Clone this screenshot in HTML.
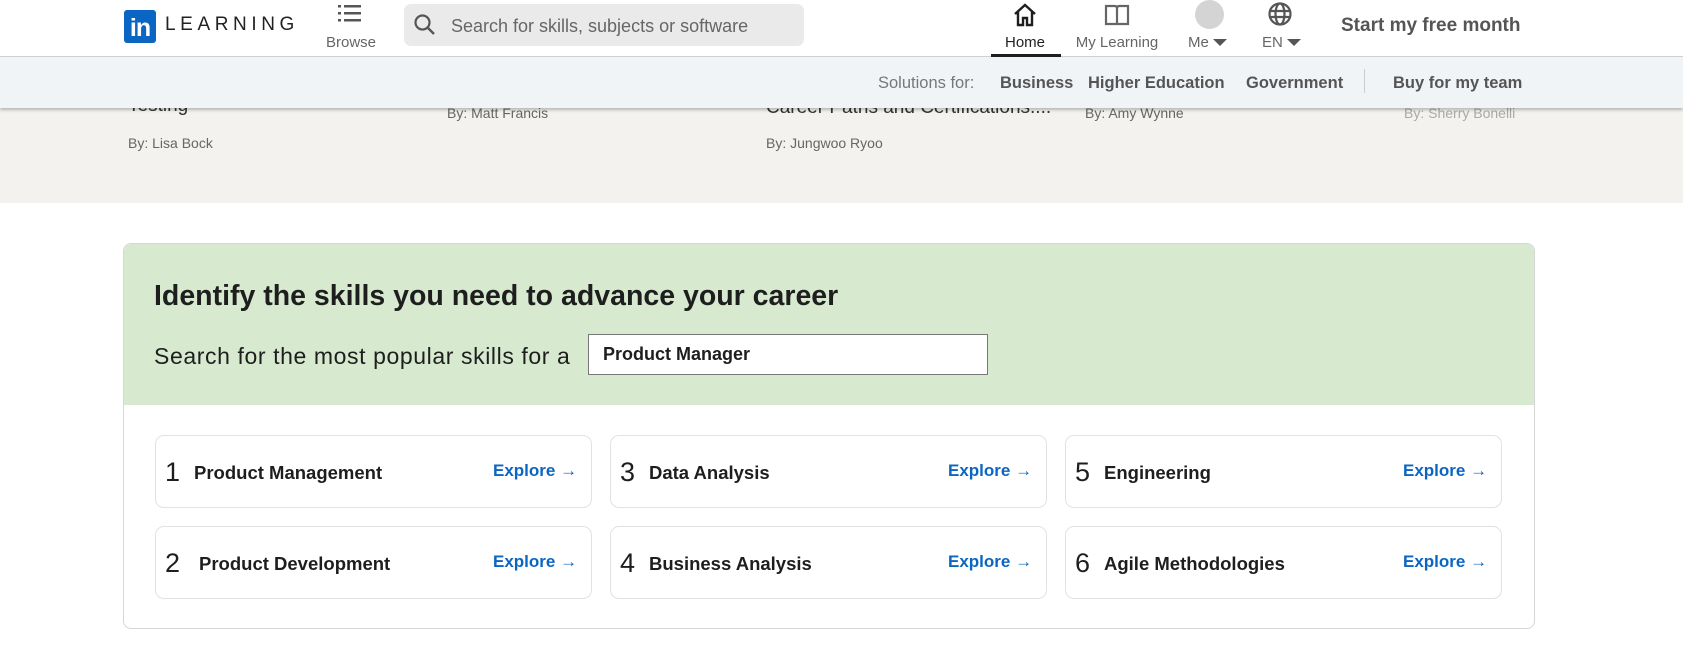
<!DOCTYPE html>
<html><head><meta charset="utf-8"><style>
*{box-sizing:border-box;margin:0;padding:0}
body{width:1683px;height:667px;overflow:hidden;background:#fff;font-family:"Liberation Sans",sans-serif;position:relative;color:#1e1e1e}
.a{position:absolute;white-space:nowrap}
#hdr{position:absolute;left:0;top:0;width:1683px;height:57px;background:#fff;border-bottom:1px solid #d0d0d0;z-index:3}
#sub{position:absolute;left:0;top:57px;width:1683px;height:51px;background:#f1f4f7;box-shadow:0 2px 3px rgba(0,0,0,.25);z-index:2}
#band{position:absolute;left:0;top:57px;width:1683px;height:146px;background:#f3f2ef}
.nav{font-size:15px;color:#666;text-align:center}
.sub{font-size:16.5px;color:#555;top:74px;font-weight:bold}
.by{font-size:14px;color:#666}
#card{position:absolute;left:123px;top:243px;width:1412px;height:386px;border:1px solid #d6d6d6;border-radius:8px;overflow:hidden}
#green{position:absolute;left:0;top:0;width:100%;height:161px;background:#d7ead0}
.tile{position:absolute;width:437px;height:73px;border:1px solid #e2e2e2;border-radius:9px;background:#fff}
.tile .n{position:absolute;left:9px;top:21px;font-size:27px;color:#1e1e1e}
.tile .l{position:absolute;left:38px;top:26px;font-size:18.5px;color:#1e1e1e;font-weight:bold}
.tile .e{position:absolute;left:337px;top:25px;font-size:17px;color:#0a66c2;font-weight:bold}
</style></head><body>
<div id="band">
<div class="a" style="left:128px;top:38px;font-size:19px;color:#333">Testing</div>
<div class="a by" style="left:128px;top:78px">By: Lisa Bock</div>
<div class="a by" style="left:447px;top:48px">By: Matt Francis</div>
<div class="a" style="left:766px;top:40px;font-size:19px;color:#333">Career Paths and Certifications....</div>
<div class="a by" style="left:766px;top:78px">By: Jungwoo Ryoo</div>
<div class="a by" style="left:1085px;top:48px">By: Amy Wynne</div>
<div class="a by" style="left:1404px;top:48px;color:#aaa">By: Sherry Bonelli</div>
</div>
<div id="hdr">
<div class="a" style="left:124px;top:10px;width:32px;height:33px;background:#0a66c2;border-radius:3px;color:#fff;font-weight:bold;font-size:25px;line-height:36px;text-align:center;letter-spacing:-1px">in</div>
<div class="a" style="left:165px;top:14px;font-size:19px;letter-spacing:4.6px;color:#222">LEARNING</div>
<svg class="a" style="left:336px;top:2px" width="28" height="24" viewBox="0 0 28 24"><g fill="#555"><rect x="2" y="3" width="3" height="2.5"/><rect x="2" y="10" width="3" height="2.5"/><rect x="2" y="17" width="3" height="2.5"/><rect x="8" y="3" width="17" height="2.5"/><rect x="8" y="10" width="17" height="2.5"/><rect x="8" y="17" width="17" height="2.5"/></g></svg>
<div class="a nav" style="left:325px;top:34px;width:52px">Browse</div>
<div class="a" style="left:404px;top:4px;width:400px;height:42px;background:#eaeaea;border-radius:7px"></div>
<svg class="a" style="left:413px;top:13px" width="24" height="24" viewBox="0 0 24 24"><circle cx="9.5" cy="9.5" r="7" fill="none" stroke="#555" stroke-width="2.2"/><line x1="14.5" y1="14.5" x2="21" y2="21" stroke="#555" stroke-width="2.4"/></svg>
<div class="a" style="left:451px;top:16px;font-size:18px;color:#666">Search for skills, subjects or software</div>
<svg class="a" style="left:1012px;top:2px" width="26" height="26" viewBox="0 0 26 26"><path d="M3 12 L13 3 L23 12 M6 10 V23 H11 V16 H15 V23 H20 V10" fill="none" stroke="#1e1e1e" stroke-width="2.4"/></svg>
<div class="a nav" style="left:995px;top:34px;width:60px;color:#222">Home</div>
<div class="a" style="left:991px;top:54px;width:70px;height:3px;background:#1e1e1e"></div>
<svg class="a" style="left:1104px;top:3px" width="26" height="24" viewBox="0 0 26 24"><path d="M2 3 H11 Q13 3 13 6 Q13 3 15 3 H24 V21 H2 Z M13 6 V21" fill="none" stroke="#666" stroke-width="2.2"/></svg>
<div class="a nav" style="left:1072px;top:34px;width:90px">My Learning</div>
<div class="a" style="left:1195px;top:0;width:29px;height:29px;border-radius:50%;background:#d4d4d4"></div>
<div class="a nav" style="left:1188px;top:34px">Me <svg width="14" height="9" viewBox="0 0 14 9"><path d="M0 1 H14 L7 8 Z" fill="#555"/></svg></div>
<svg class="a" style="left:1267px;top:1px" width="26" height="26" viewBox="0 0 26 26"><g fill="none" stroke="#555" stroke-width="2.2"><circle cx="13" cy="13" r="10.5"/><ellipse cx="13" cy="13" rx="4.5" ry="10.5"/><line x1="2.5" y1="10" x2="23.5" y2="10"/><line x1="2.5" y1="16" x2="23.5" y2="16"/></g></svg>
<div class="a nav" style="left:1262px;top:34px">EN <svg width="14" height="9" viewBox="0 0 14 9"><path d="M0 1 H14 L7 8 Z" fill="#555"/></svg></div>
<div class="a" style="left:1341px;top:15px;font-size:19px;color:#555;font-weight:bold">Start my free month</div>
</div>
<div id="sub">
<div class="a sub" style="left:878px;top:17px;color:#777;font-weight:normal">Solutions for:</div>
<div class="a sub" style="left:1000px;top:17px">Business</div>
<div class="a sub" style="left:1088px;top:17px">Higher Education</div>
<div class="a sub" style="left:1246px;top:17px">Government</div>
<div class="a" style="left:1364px;top:12px;width:1px;height:24px;background:#ccc"></div>
<div class="a sub" style="left:1393px;top:17px">Buy for my team</div>
</div>
<div id="card">
<div id="green"></div>
<div class="a" style="left:30px;top:36px;font-size:28.5px;color:#1e1e1e;font-weight:bold">Identify the skills you need to advance your career</div>
<div class="a" style="left:30px;top:99px;font-size:23px;letter-spacing:0.6px;color:#1e1e1e">Search for the most popular skills for a</div>
<div class="a" style="left:464px;top:90px;width:400px;height:41px;background:#fff;border:1px solid #777;font-size:18px;padding:9px 14px;color:#1e1e1e;font-weight:bold">Product Manager</div>
<div class="tile" style="left:31px;top:191px"><span class="n">1</span><span class="l">Product Management</span><span class="e">Explore →</span></div>
<div class="tile" style="left:486px;top:191px"><span class="n">3</span><span class="l">Data Analysis</span><span class="e">Explore →</span></div>
<div class="tile" style="left:941px;top:191px"><span class="n">5</span><span class="l">Engineering</span><span class="e">Explore →</span></div>
<div class="tile" style="left:31px;top:282px"><span class="n">2</span><span class="l" style="left:43px">Product Development</span><span class="e">Explore →</span></div>
<div class="tile" style="left:486px;top:282px"><span class="n">4</span><span class="l">Business Analysis</span><span class="e">Explore →</span></div>
<div class="tile" style="left:941px;top:282px"><span class="n">6</span><span class="l">Agile Methodologies</span><span class="e">Explore →</span></div>
</div>
</body></html>
